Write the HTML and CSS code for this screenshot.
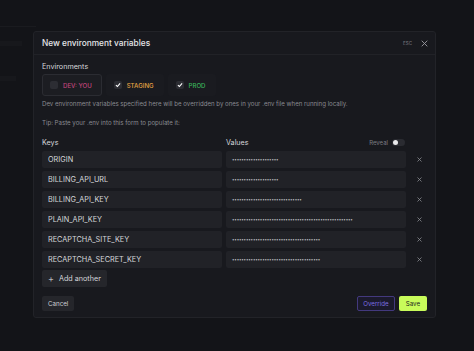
FILE: index.html
```html
<!DOCTYPE html>
<html lang="en">
<head>
  <meta charset="UTF-8">
  <meta name="viewport" content="width=device-width, initial-scale=1.0">
  <title>New environment variables</title>
  <link rel="stylesheet" href="styles.css">
</head>
<body>
  <div class="page">
    <div class="side">
      <div class="side-line"></div>
      <div class="side-item"></div>
      <div class="side-item short"></div>
    </div>
  </div>

  <div class="modal">
    <div class="modal-header">
      <span class="modal-title">New environment variables</span>
      <span class="esc">ESC</span>
      <svg class="close" width="7" height="7" viewBox="0 0 10 10"><path d="M1 1L9 9M9 1L1 9" stroke="#9a9ba1" stroke-width="1.3"/></svg>
    </div>

    <div class="modal-body">
      <div class="label">Environments</div>
      <div class="envs">
        <div class="env env-selected">
          <span class="box"></span>
          <span class="env-dev">DEV: YOU</span>
        </div>
        <div class="env">
          <span class="box checked"><svg width="6" height="6" viewBox="0 0 8 8"><path d="M1.2 4.2L3.2 6L6.8 1.8" stroke="#fff" stroke-width="1.5" fill="none"/></svg></span>
          <span class="env-staging">STAGING</span>
        </div>
        <div class="env">
          <span class="box checked"><svg width="6" height="6" viewBox="0 0 8 8"><path d="M1.2 4.2L3.2 6L6.8 1.8" stroke="#fff" stroke-width="1.5" fill="none"/></svg></span>
          <span class="env-prod">PROD</span>
        </div>
      </div>
      <p class="hint">Dev environment variables specified here will be overridden by ones in your .env file when running locally.</p>
      <p class="hint tip">Tip: Paste your .env into this form to populate it:</p>

      <div class="grid-head">
        <span class="label keys-label">Keys</span>
        <span class="label values-label">Values</span>
        <span class="reveal">Reveal <span class="toggle"><span class="knob"></span></span></span>
      </div>

      <div class="rows">
        <div class="row">
          <div class="field">ORIGIN</div>
          <div class="field secret">••••••••••••••••••••</div>
          <svg class="remove" width="5" height="5" viewBox="0 0 10 10"><path d="M1 1L9 9M9 1L1 9" stroke="#8a8b91" stroke-width="1.6"/></svg>
        </div>
        <div class="row">
          <div class="field">BILLING_API_URL</div>
          <div class="field secret">••••••••••••••••••••</div>
          <svg class="remove" width="5" height="5" viewBox="0 0 10 10"><path d="M1 1L9 9M9 1L1 9" stroke="#8a8b91" stroke-width="1.6"/></svg>
        </div>
        <div class="row">
          <div class="field">BILLING_API_KEY</div>
          <div class="field secret">••••••••••••••••••••••••••••••</div>
          <svg class="remove" width="5" height="5" viewBox="0 0 10 10"><path d="M1 1L9 9M9 1L1 9" stroke="#8a8b91" stroke-width="1.6"/></svg>
        </div>
        <div class="row">
          <div class="field">PLAIN_API_KEY</div>
          <div class="field secret">••••••••••••••••••••••••••••••••••••••••••••••••••••</div>
          <svg class="remove" width="5" height="5" viewBox="0 0 10 10"><path d="M1 1L9 9M9 1L1 9" stroke="#8a8b91" stroke-width="1.6"/></svg>
        </div>
        <div class="row">
          <div class="field">RECAPTCHA_SITE_KEY</div>
          <div class="field secret">••••••••••••••••••••••••••••••••••••••</div>
          <svg class="remove" width="5" height="5" viewBox="0 0 10 10"><path d="M1 1L9 9M9 1L1 9" stroke="#8a8b91" stroke-width="1.6"/></svg>
        </div>
        <div class="row">
          <div class="field">RECAPTCHA_SECRET_KEY</div>
          <div class="field secret">••••••••••••••••••••••••••••••••••••••</div>
          <svg class="remove" width="5" height="5" viewBox="0 0 10 10"><path d="M1 1L9 9M9 1L1 9" stroke="#8a8b91" stroke-width="1.6"/></svg>
        </div>
      </div>

      <button class="add-btn"><span class="plus">+</span> Add another</button>

      <div class="footer">
        <button class="btn btn-cancel">Cancel</button>
        <div class="footer-right">
          <button class="btn btn-override">Override</button>
          <button class="btn btn-save">Save</button>
        </div>
      </div>
    </div>
  </div>
</body>
</html>
```

FILE: styles.css
```css
body {
  margin: 0;
  padding: 0;
  background-color: #131418;
  font-family: Inter, "Noto Sans", sans-serif;
  color: #d6d7db;
  width: 474px;
  height: 351px;
  overflow: hidden;
}

.page {
  height: 351px;
}

.side {
  padding-top: 26px;
  width: 35px;
}

.side-line {
  height: 1px;
  background-color: #1a1b1f;
  width: 36px;
}

.side-item {
  margin: 14px 0 0 0;
  height: 5px;
  width: 22px;
  background-color: #17181c;
}

.side-item.short {
  width: 16px;
  margin-top: 30px;
}

.modal {
  position: absolute;
  left: 33px;
  top: 31px;
  width: 403px;
  background-color: #18191e;
  border: 1px solid #222328;
  border-radius: 3px;
  box-sizing: border-box;
}

.modal-header {
  display: flex;
  align-items: center;
  height: 22px;
  padding: 0 7px 0 8px;
  border-bottom: 1px solid #212227;
}

.modal-title {
  font-size: 8.3px;
  font-weight: 500;
  color: #e6e7ea;
  flex: 1;
}

.esc {
  font-size: 4.5px;
  color: #7b7c82;
  margin-right: 9px;
}

.close {
  display: block;
}

.modal-body {
  padding: 7px 8px 6px 8px;
}

.label {
  font-size: 7.2px;
  line-height: 9px;
  color: #d6d7db;
}

.envs {
  display: flex;
  gap: 4px;
  margin-top: 3px;
}

.env {
  display: flex;
  align-items: center;
  gap: 5px;
  height: 22px;
  padding: 0 9px 0 7px;
  border: 1px solid transparent;
  border-radius: 3px;
  background-color: #1a1b20;
  font-size: 6.1px;
  font-weight: 500;
  box-sizing: border-box;
}

.env-selected {
  border-color: #2b2c32;
  background-color: #1c1d22;
}

.box {
  width: 8px;
  height: 8px;
  border-radius: 2px;
  background-color: #2c2d33;
  display: flex;
  align-items: center;
  justify-content: center;
}

.env-dev {
  color: #c2457d;
}

.env-staging {
  color: #e4a444;
}

.env-prod {
  color: #3ab65c;
}

.hint {
  margin: 4px 0 0 0;
  font-size: 6.1px;
  line-height: 8px;
  color: #8a8b91;
}

.tip {
  margin-top: 11px;
}

.grid-head {
  display: flex;
  align-items: center;
  margin-top: 10px;
  height: 10px;
}

.keys-label {
  width: 184px;
}

.values-label {
  flex: 1;
}

.reveal {
  display: flex;
  align-items: center;
  gap: 4px;
  font-size: 6px;
  color: #7c7d83;
  margin-right: 22px;
}

.toggle {
  width: 13px;
  height: 7px;
  border-radius: 4px;
  background-color: #2a2b31;
  display: flex;
  align-items: center;
  padding-left: 1px;
  box-sizing: border-box;
}

.knob {
  width: 5px;
  height: 5px;
  border-radius: 50%;
  background-color: #e8e8ea;
}

.rows {
  display: flex;
  flex-direction: column;
  gap: 3px;
  margin-top: 4px;
}

.row {
  display: flex;
  align-items: center;
  gap: 4px;
}

.field {
  width: 180px;
  height: 17px;
  border-radius: 2px;
  background-color: #212227;
  font-size: 7.3px;
  line-height: 17px;
  padding-left: 6px;
  box-sizing: border-box;
  color: #d6d7db;
  white-space: nowrap;
  overflow: hidden;
}

.secret {
  font-size: 4.4px;
  letter-spacing: -0.15px;
  color: #b8b9be;
}

.remove {
  margin-left: 7px;
  display: block;
}

.add-btn {
  margin-top: 2px;
  display: flex;
  align-items: center;
  gap: 5px;
  height: 17px;
  padding: 0 6px 0 6px;
  border: none;
  border-radius: 2px;
  background-color: #25262b;
  color: #d6d7db;
  font-family: Inter, "Noto Sans", sans-serif;
  font-size: 7.2px;
}

.plus {
  font-size: 9px;
  color: #b8b9be;
}

.footer {
  display: flex;
  justify-content: space-between;
  align-items: center;
  margin-top: 9px;
}

.footer-right {
  display: flex;
  gap: 4px;
}

.btn {
  margin: 0;
  height: 15px;
  padding: 0 5px 0 5px;
  border-radius: 2px;
  font-family: Inter, "Noto Sans", sans-serif;
  font-size: 6.2px;
  border: 1px solid transparent;
  box-sizing: border-box;
}

.btn-cancel {
  background-color: #25262b;
  color: #cfd0d4;
}

.btn-override {
  background-color: #1b1a2c;
  border-color: #43397e;
  color: #7c6ee0;
}

.btn-save {
  background-color: #c8fb5a;
  color: #1a1b20;
  padding: 0 6px 0 6px;
}
```
